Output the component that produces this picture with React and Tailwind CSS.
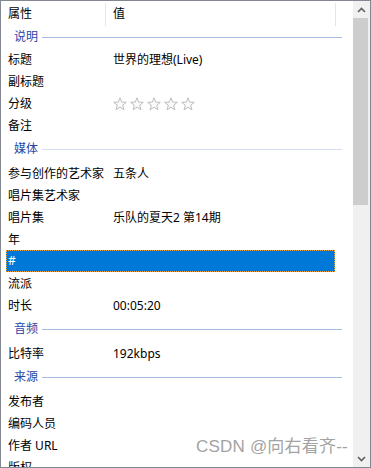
import React from "react";

const groups = [
  {
    name: "说明",
    h: "h-[22px]",
    line: "bg-[#a9bde2]",
    rows: [
      ["标题", "世界的理想(Live)"],
      ["副标题", ""],
      ["分级", "stars"],
      ["备注", ""],
    ],
  },
  {
    name: "媒体",
    h: "h-[26px]",
    line: "bg-[#d3ddf0]",
    rows: [
      ["参与创作的艺术家", "五条人"],
      ["唱片集艺术家", ""],
      ["唱片集", "乐队的夏天2 第14期"],
      ["年", ""],
      ["#", "", true],
      ["流派", ""],
      ["时长", "00:05:20"],
    ],
  },
  {
    name: "音频",
    h: "h-[26px]",
    line: "bg-[#a9bde2]",
    rows: [["比特率", "192kbps"]],
  },
  {
    name: "来源",
    h: "h-[26px]",
    line: "bg-[#a9bde2]",
    rows: [
      ["发布者", ""],
      ["编码人员", ""],
      ["作者 URL", ""],
      ["版权", ""],
    ],
  },
];

function Star() {
  return (
    <svg width="14" height="14" viewBox="0 0 14 14">
      <path
        d="M7 0.8 L8.7 5.1 L13.3 5.3 L9.7 8.2 L10.9 12.8 L7 10.2 L3.1 12.8 L4.3 8.2 L0.7 5.3 L5.3 5.1 Z"
        fill="#fafafa"
        stroke="#bdbdbd"
        strokeWidth="1"
        strokeLinejoin="round"
      />
    </svg>
  );
}

function Row({ label, value, selected }) {
  return (
    <div
      className={
        selected
          ? "ml-[5px] w-[329px] h-[22px] flex items-center pl-px bg-[#0078d7] border border-dotted border-[#f0a23c] text-white"
          : "ml-[5px] w-[329px] h-[22px] flex items-center pl-[2px] pt-px text-black"
      }
    >
      <span className="w-[105px] shrink-0 whitespace-nowrap">{label}</span>
      {value === "stars" ? (
        <span className="flex gap-[3px]">
          <Star />
          <Star />
          <Star />
          <Star />
          <Star />
        </span>
      ) : (
        <span className="whitespace-nowrap">{value}</span>
      )}
    </div>
  );
}

export default function App() {
  return (
    <div className="relative w-[371px] h-[468px] border border-[#828790] bg-white flex overflow-hidden text-[12px] leading-none font-['Noto_Sans','Noto_Sans_CJK_SC',sans-serif]">
      {/* list */}
      <div className="w-[352px] shrink-0 overflow-hidden">
        <div className="h-[25px] flex items-center pt-px text-black">
          <span className="w-[104px] pl-[7px]">属性</span>
          <span className="w-px h-[23px] bg-[#e5e5e5]" />
          <span className="w-[229px] pl-[7px]">值</span>
          <span className="w-px h-[23px] bg-[#e5e5e5]" />
        </div>

        {groups.map((g) => (
          <div key={g.name}>
            <div className={`${g.h} flex items-center pl-[13px] pr-[11px]`}>
              <span className="text-[#2a46a6] whitespace-nowrap">{g.name}</span>
              <span className={`flex-1 h-px ml-[4px] ${g.line}`} />
            </div>
            {g.rows.map(([label, value, selected]) => (
              <Row key={label} label={label} value={value} selected={selected} />
            ))}
          </div>
        ))}
      </div>

      {/* scrollbar */}
      <div className="w-[17px] shrink-0 bg-[#f0f0f0] flex flex-col">
        <div className="h-[17px] flex items-center justify-center">
          <svg width="9" height="6" viewBox="0 0 9 6">
            <path d="M1 5 L4.5 1.5 L8 5" fill="none" stroke="#606060" strokeWidth="1.6" />
          </svg>
        </div>
        <div className="w-[15px] h-[187px] bg-[#cdcdcd]" />
        <div className="flex-1" />
        <div className="h-[17px] flex items-center justify-center">
          <svg width="9" height="6" viewBox="0 0 9 6">
            <path d="M1 1 L4.5 4.5 L8 1" fill="none" stroke="#606060" strokeWidth="1.6" />
          </svg>
        </div>
      </div>

      {/* watermark */}
      <div className="absolute left-[195px] top-[437px] text-[17px] leading-none whitespace-nowrap text-[#a3a3a3] font-['Liberation_Sans','Noto_Sans_CJK_SC',sans-serif] tracking-[0.2px] [text-shadow:0_0_1px_#ffffff]">
        CSDN @向右看齐--
      </div>
    </div>
  );
}
